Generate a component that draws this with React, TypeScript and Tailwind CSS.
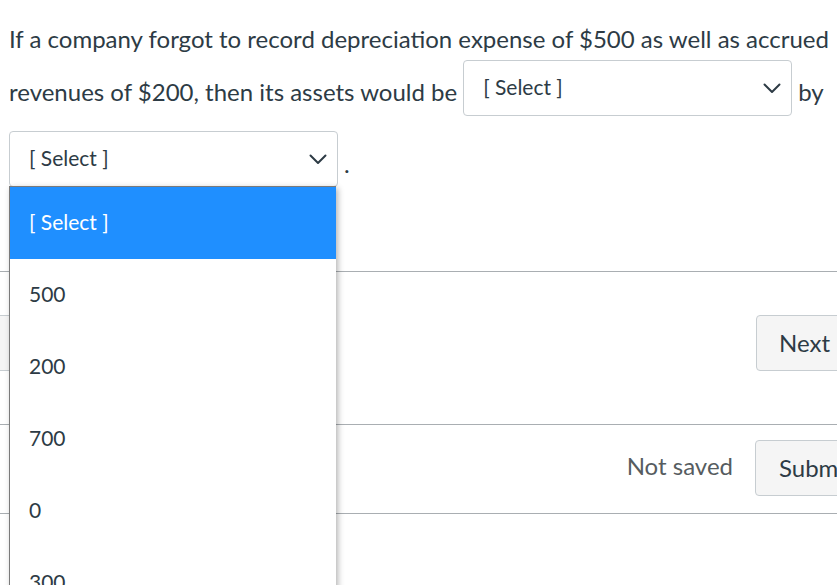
import React from 'react';

const font = { fontFamily: 'Lato, "Noto Sans", sans-serif' };

function Chevron() {
  return (
    <svg width="18" height="11" viewBox="0 0 18 11" fill="none" className="shrink-0">
      <polyline points="1.5,1.5 9,9 16.5,1.5" stroke="#2d3b45" strokeWidth="2" strokeLinecap="round" strokeLinejoin="round" />
    </svg>
  );
}

function SelectBox() {
  return (
    <div className="w-[329px] h-[56px] shrink-0 flex items-center justify-between pl-[19px] pr-[10px] bg-white border border-[#c7cdd1] rounded-[4px]">
      <span className="text-[21px] text-[#2d3b45] leading-none -mt-[4px]">[ Select ]</span>
      <Chevron />
    </div>
  );
}

const options = ['[ Select ]', '500', '200', '700', '0', '300'];

export default function App() {
  return (
    <div className="relative w-[837px] h-[585px] overflow-hidden bg-white text-[#2d3b45]" style={font}>
      {/* question text */}
      <div className="pl-[9px] text-[24px]">
        <div className="h-[60px] pt-[25px] leading-[28px] whitespace-nowrap">
          If a company forgot to record depreciation expense of $500 as well as accrued
        </div>
        <div className="flex items-start h-[56px] whitespace-nowrap">
          <span className="mt-[18px] leading-[28px]">revenues of $200, then its assets would be</span>
          <div className="mx-[6px]">
            <SelectBox />
          </div>
          <span className="mt-[18px] leading-[28px]">by</span>
        </div>
        <div className="flex items-start mt-[15px] h-[56px]">
          <SelectBox />
          <span className="ml-[6px] mt-[19px] leading-[28px]">.</span>
        </div>
      </div>

      {/* quiz navigation */}
      <div className="mt-[84px] w-[880px] border-t border-[#a9aeb2]">
        <div className="h-[152px] flex items-start justify-between pt-[43px]">
          <button className="-ml-[60px] w-[120px] h-[56px] bg-[#f5f5f5] border border-[#c7cdd1] rounded-[4px]" />
          <button className="mr-[27px] h-[56px] px-[22px] bg-[#f5f5f5] border border-[#c7cdd1] rounded-[4px] text-[24px] text-[#2d3b45]">
            Next
          </button>
        </div>
        <div className="h-[90px] border-t border-b border-[#a9aeb2] flex items-start justify-end pt-[15px]">
          <span className="mt-[12px] mr-[22px] text-[24px] leading-[28px] text-[#565c60]">Not saved</span>
          <button className="-mr-[20px] h-[56px] w-[145px] pl-[23px] text-left bg-[#f5f5f5] border border-[#c7cdd1] rounded-[4px] text-[24px] text-[#2d3b45]">
            Submit
          </button>
        </div>
      </div>

      {/* open dropdown list */}
      <div className="absolute left-[9px] top-[186px] w-[327px] h-[420px] bg-white border-l border-t border-[#7a7a7a] shadow-[2px_2px_6px_rgba(0,0,0,0.3)]">
        {options.map((o, i) => (
          <div
            key={o}
            className={`h-[72px] flex items-center pl-[19px] pb-[2px] text-[21px] ${
              i === 0 ? 'bg-[#1f8fff] text-white' : 'text-[#2d3b45]'
            }`}
          >
            {o}
          </div>
        ))}
      </div>
    </div>
  );
}
